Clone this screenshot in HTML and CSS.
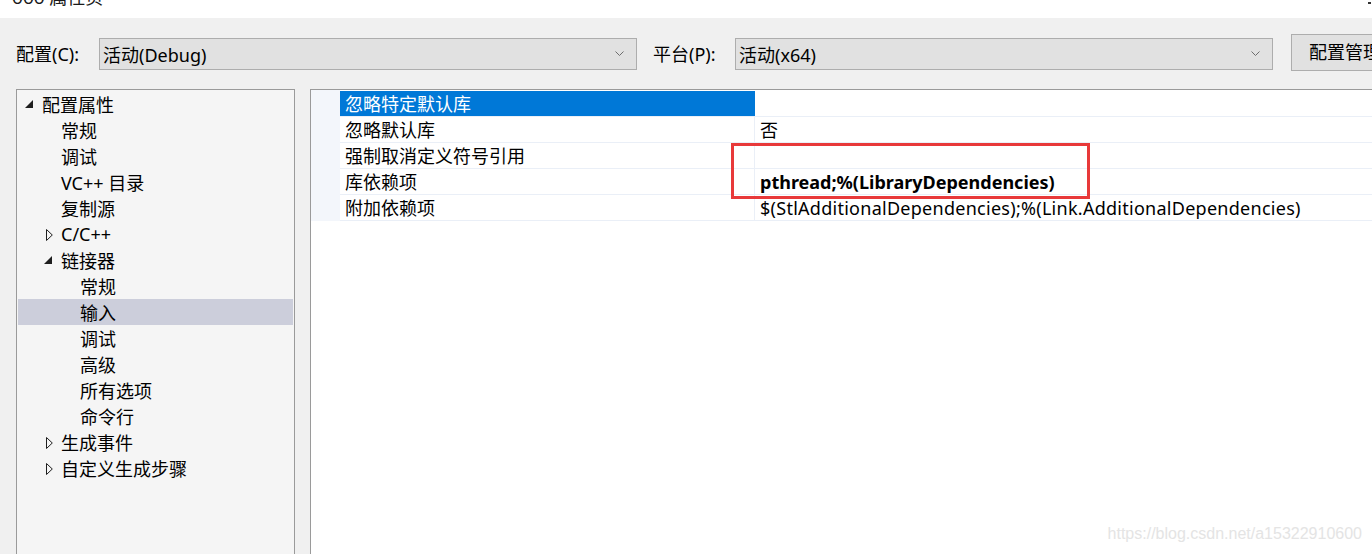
FILE: index.html
```html
<!DOCTYPE html>
<html lang="zh-CN">
<head>
<meta charset="utf-8">
<title>属性页</title>
<link rel="stylesheet" href="styles.css">
</head>
<body>
<div class="window">
  <div class="titlebar">
    <span class="title">ooo 属性页</span>
    <span class="close"></span>
  </div>
  <div class="toolbar">
    <span class="lbl">配置(C):</span>
    <div class="combo">
      <span class="combo-text">活动(Debug)</span>
      <svg class="chev" width="9" height="6" viewBox="0 0 9 6"><polyline points="0.5,0.5 4.5,4.5 8.5,0.5" fill="none" stroke="#6d6d6d" stroke-width="1"/></svg>
    </div>
    <span class="lbl lbl2">平台(P):</span>
    <div class="combo">
      <span class="combo-text">活动(x64)</span>
      <svg class="chev" width="9" height="6" viewBox="0 0 9 6"><polyline points="0.5,0.5 4.5,4.5 8.5,0.5" fill="none" stroke="#6d6d6d" stroke-width="1"/></svg>
    </div>
    <div class="btn">配置管理器(O)...</div>
  </div>
  <div class="main">
    <div class="tree">
      <div class="item l0"><span class="tw"><svg class="exp" width="9" height="8" viewBox="0 0 9 8"><polygon points="8,0 8,8 0,8" fill="#1e1e1e"/></svg></span><span>配置属性</span></div>
      <div class="item l1"><span class="tw"></span><span>常规</span></div>
      <div class="item l1"><span class="tw"></span><span>调试</span></div>
      <div class="item l1"><span class="tw"></span><span>VC++ 目录</span></div>
      <div class="item l1"><span class="tw"></span><span>复制源</span></div>
      <div class="item l1"><span class="tw"><svg class="col" width="7" height="12" viewBox="0 0 7 12"><polygon points="0.5,0.5 6.3,6 0.5,11.5" fill="none" stroke="#1e1e1e" stroke-width="1"/></svg></span><span>C/C++</span></div>
      <div class="item l1"><span class="tw"><svg class="exp" width="9" height="8" viewBox="0 0 9 8"><polygon points="8,0 8,8 0,8" fill="#1e1e1e"/></svg></span><span>链接器</span></div>
      <div class="item l2"><span class="tw"></span><span>常规</span></div>
      <div class="item l2 sel"><span class="tw"></span><span>输入</span></div>
      <div class="item l2"><span class="tw"></span><span>调试</span></div>
      <div class="item l2"><span class="tw"></span><span>高级</span></div>
      <div class="item l2"><span class="tw"></span><span>所有选项</span></div>
      <div class="item l2"><span class="tw"></span><span>命令行</span></div>
      <div class="item l1"><span class="tw"><svg class="col" width="7" height="12" viewBox="0 0 7 12"><polygon points="0.5,0.5 6.3,6 0.5,11.5" fill="none" stroke="#1e1e1e" stroke-width="1"/></svg></span><span>生成事件</span></div>
      <div class="item l1"><span class="tw"><svg class="col" width="7" height="12" viewBox="0 0 7 12"><polygon points="0.5,0.5 6.3,6 0.5,11.5" fill="none" stroke="#1e1e1e" stroke-width="1"/></svg></span><span>自定义生成步骤</span></div>
    </div>
    <div class="props">
      <div class="grid">
        <div class="gutter"></div>
        <div class="rows">
          <div class="row selected"><div class="name">忽略特定默认库</div><div class="value"></div></div>
          <div class="row"><div class="name">忽略默认库</div><div class="value">否</div></div>
          <div class="row"><div class="name">强制取消定义符号引用</div><div class="value"></div></div>
          <div class="row"><div class="name">库依赖项</div><div class="value bold">pthread;%(LibraryDependencies)</div></div>
          <div class="row"><div class="name">附加依赖项</div><div class="value spaced">$(StlAdditionalDependencies);%(Link.AdditionalDependencies)</div></div>
        </div>
      </div>
      <div class="redbox"></div>
    </div>
  </div>
  <div class="watermark">https://blog.csdn.net/a15322910600</div>
</div>
</body>
</html>
```

FILE: styles.css
```css
html, body {
  margin: 0;
  padding: 0;
}
body {
  width: 1372px;
  height: 554px;
  overflow: hidden;
  background: #f0f0f0;
  font-family: "Noto Sans", "Noto Sans CJK SC", sans-serif;
  font-size: 18px;
  color: #000;
}
.window {
  position: relative;
  width: 1372px;
  height: 554px;
  overflow: hidden;
  background: #f0f0f0;
}
.titlebar {
  height: 18px;
  background: #fff;
  overflow: hidden;
  display: flex;
  align-items: flex-start;
}
.title {
  margin-left: 12px;
  margin-top: -12px;
  line-height: 18px;
  font-size: 18px;
  color: #1a1a1a;
}
.close {
  margin-left: auto;
  margin-top: 2px;
  margin-right: 1px;
  width: 3px;
  height: 2px;
  background: #333;
}
.toolbar {
  height: 71px;
  box-sizing: border-box;
  padding-top: 16px;
  padding-left: 16px;
  display: flex;
  align-items: flex-start;
}
.toolbar > * {
  flex: none;
}
.lbl {
  width: 83px;
  margin-top: 4px;
  height: 32px;
  line-height: 32px;
  white-space: nowrap;
}
.lbl2 {
  margin-left: 16px;
  width: 82px;
}
.combo {
  margin-top: 4px;
  width: 538px;
  height: 32px;
  box-sizing: border-box;
  border: 1px solid #adadad;
  background: #e1e1e1;
  display: flex;
  align-items: center;
  padding-left: 3px;
  padding-right: 12px;
}
.combo-text {
  flex: 1;
  white-space: nowrap;
}
.chev {
  display: block;
}
.btn {
  margin-left: 18px;
  width: 140px;
  height: 37px;
  box-sizing: border-box;
  border: 1px solid #adadad;
  background: #e1e1e1;
  padding-left: 17px;
  line-height: 34px;
  white-space: nowrap;
  overflow: hidden;
}
.main {
  display: flex;
  padding-left: 16px;
  height: 480px;
  align-items: stretch;
}
.tree {
  width: 279px;
  flex: none;
  box-sizing: border-box;
  border: 1px solid #9a9a9a;
  background: #f5f5f5;
  padding: 1px;
}
.item {
  height: 26px;
  display: flex;
  align-items: center;
  white-space: nowrap;
}
.l0 { padding-left: 6px; }
.l1 { padding-left: 25px; }
.l2 { padding-left: 44px; }
.tw {
  width: 18px;
  flex: none;
  display: flex;
  align-items: center;
}
.tw .exp { margin-left: 1px; display: block; }
.tw .col { margin-left: 3px; margin-top: 2px; display: block; }
.item.sel {
  background: #cccedb;
}
.props {
  position: relative;
  margin-left: 15px;
  flex: 1;
  box-sizing: border-box;
  border: 1px solid #9a9a9a;
  border-right: none;
  background: #fff;
}
.grid {
  display: flex;
}
.gutter {
  width: 29px;
  flex: none;
  background: #f3f6fb;
}
.rows {
  flex: 1;
  padding-top: 1px;
}
.row {
  display: flex;
  height: 26px;
  box-sizing: border-box;
  border-bottom: 1px solid #eaeff7;
}
.name {
  width: 415px;
  flex: none;
  box-sizing: border-box;
  border-right: 1px solid #eaeff7;
  padding-left: 5px;
  line-height: 27px;
  white-space: nowrap;
}
.value {
  flex: 1;
  padding-left: 5px;
  line-height: 27px;
  white-space: nowrap;
}
.value.bold {
  font-weight: bold;
}
.value.spaced {
  letter-spacing: 0.27px;
}
.row.selected .name {
  background: #0078d7;
  color: #fff;
  border-right-color: #0078d7;
}
.redbox {
  position: absolute;
  left: 420px;
  top: 53px;
  width: 359px;
  height: 56px;
  box-sizing: border-box;
  border: 3px solid #e8393a;
}
.watermark {
  position: absolute;
  right: 10px;
  bottom: 11px;
  font-family: "Liberation Sans", Arial, sans-serif;
  font-size: 16px;
  color: #e4e4e4;
  white-space: nowrap;
}
```
